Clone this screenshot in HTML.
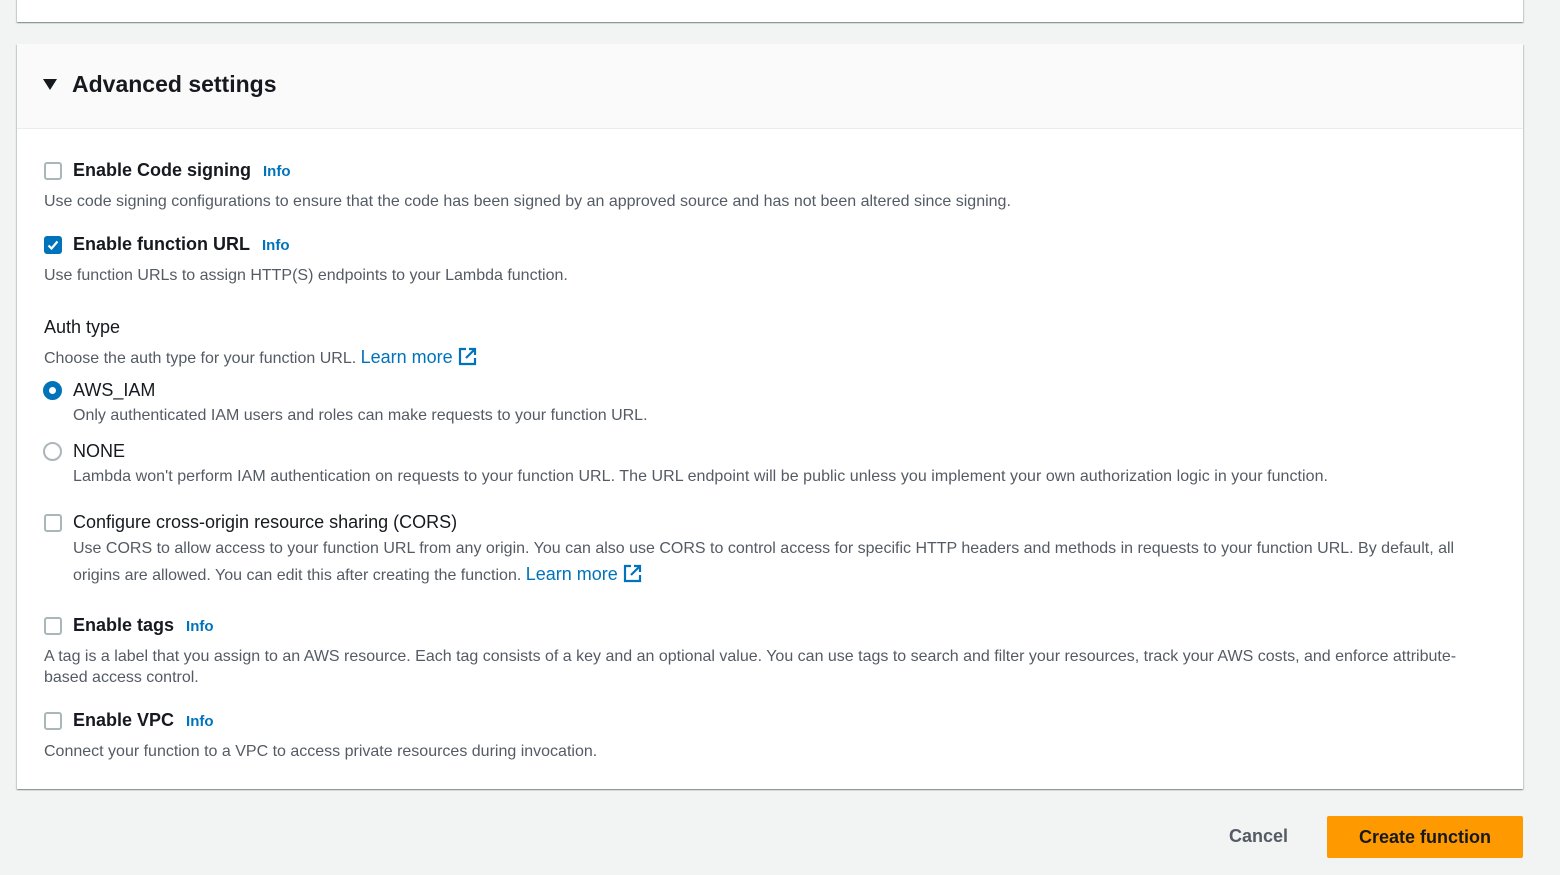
<!DOCTYPE html>
<html><head><meta charset="utf-8"><style>
*{margin:0;padding:0;box-sizing:border-box}
body{width:1560px;height:875px;background:#f2f3f3;font-family:"Liberation Sans",sans-serif;position:relative;overflow:hidden;color:#16191f}
.p{position:absolute;background:#fff;box-shadow:0 1px 1px 0 rgba(0,28,36,.3),1px 1px 1px 0 rgba(0,28,36,.15),-1px 1px 1px 0 rgba(0,28,36,.15)}
.t{position:absolute;white-space:nowrap}
.lbl{font-size:18px;font-weight:bold}
.lbln{font-size:18px}
.d{font-size:16px;color:#545b64}
.info{font-size:15px;font-weight:bold;color:#0073bb;margin-left:12px}
.a{color:#0073bb;font-size:18px}
.cb{position:absolute;width:18px;height:18px;border:2px solid #aab7b8;border-radius:3px;background:#fff}
.cb.on{background:#0073bb;border-color:#0073bb}
.rd{position:absolute;width:19px;height:19px;border-radius:50%;border:2px solid #aab7b8;background:#fff}
.rd.on{border:6px solid #0073bb}
svg.ext{vertical-align:-3px;margin-left:5px}
</style></head><body>
<div class="p" style="left:17px;top:-10px;width:1506px;height:32px"></div>
<div class="p" style="left:17px;top:44px;width:1506px;height:745px">
  <div style="position:absolute;left:0;top:0;width:100%;height:85px;background:#fafafa;border-bottom:1px solid #eaeded"></div>
</div>
<svg style="position:absolute;left:43px;top:79px" width="14" height="12"><path d="M0 0H14L7 11Z" fill="#16191f"/></svg>
<div class="t" style="left:72px;top:71px;font-size:23px;font-weight:bold">Advanced settings</div>

<div class="cb" style="left:44px;top:162px"></div>
<div class="t lbl" style="left:73px;top:160px">Enable Code signing<span class="info">Info</span></div>
<div class="t d" style="left:44px;top:193px">Use code signing configurations to ensure that the code has been signed by an approved source and has not been altered since signing.</div>

<div class="cb on" style="left:44px;top:236px"><svg width="14" height="14" style="position:absolute;left:0;top:0"><path d="M2.5 7.5L5.5 10.5L11.5 3.5" stroke="#fff" stroke-width="2.2" fill="none"/></svg></div>
<div class="t lbl" style="left:73px;top:234px">Enable function URL<span class="info">Info</span></div>
<div class="t d" style="left:44px;top:267px">Use function URLs to assign HTTP(S) endpoints to your Lambda function.</div>

<div class="t lbln" style="left:44px;top:317px">Auth type</div>
<div class="t d" style="left:44px;top:347px">Choose the auth type for your function URL. <span class="a">Learn more<svg class="ext" width="19" height="19" viewBox="0 0 19 19"><path d="M8 2H2V17H17V11M11 2H17V8M17 2L8 11" stroke="#0073bb" stroke-width="2.2" fill="none"/></svg></span></div>

<div class="rd on" style="left:43px;top:381px"></div>
<div class="t lbln" style="left:73px;top:380px">AWS_IAM</div>
<div class="t d" style="left:73px;top:407px">Only authenticated IAM users and roles can make requests to your function URL.</div>

<div class="rd" style="left:43px;top:442px"></div>
<div class="t lbln" style="left:73px;top:441px">NONE</div>
<div class="t d" style="left:73px;top:468px;letter-spacing:0.05px">Lambda won't perform IAM authentication on requests to your function URL. The URL endpoint will be public unless you implement your own authorization logic in your function.</div>

<div class="cb" style="left:44px;top:514px"></div>
<div class="t lbln" style="left:73px;top:512px">Configure cross-origin resource sharing (CORS)</div>
<div class="t d" style="left:73px;top:540px">Use CORS to allow access to your function URL from any origin. You can also use CORS to control access for specific HTTP headers and methods in requests to your function URL. By default, all</div>
<div class="t d" style="left:73px;top:564px">origins are allowed. You can edit this after creating the function. <span class="a">Learn more<svg class="ext" width="19" height="19" viewBox="0 0 19 19"><path d="M8 2H2V17H17V11M11 2H17V8M17 2L8 11" stroke="#0073bb" stroke-width="2.2" fill="none"/></svg></span></div>

<div class="cb" style="left:44px;top:617px"></div>
<div class="t lbl" style="left:73px;top:615px">Enable tags<span class="info">Info</span></div>
<div class="t d" style="left:44px;top:648px">A tag is a label that you assign to an AWS resource. Each tag consists of a key and an optional value. You can use tags to search and filter your resources, track your AWS costs, and enforce attribute-</div>
<div class="t d" style="left:44px;top:669px">based access control.</div>

<div class="cb" style="left:44px;top:712px"></div>
<div class="t lbl" style="left:73px;top:710px">Enable VPC<span class="info">Info</span></div>
<div class="t d" style="left:44px;top:743px">Connect your function to a VPC to access private resources during invocation.</div>

<div class="t" style="left:1229px;top:826px;font-size:18px;font-weight:bold;color:#545b64">Cancel</div>
<div style="position:absolute;left:1327px;top:816px;width:196px;height:42px;background:#ff9900;border-radius:2px;font-size:18px;font-weight:bold;color:#16191f;text-align:center;line-height:42px">Create function</div>
</body></html>
